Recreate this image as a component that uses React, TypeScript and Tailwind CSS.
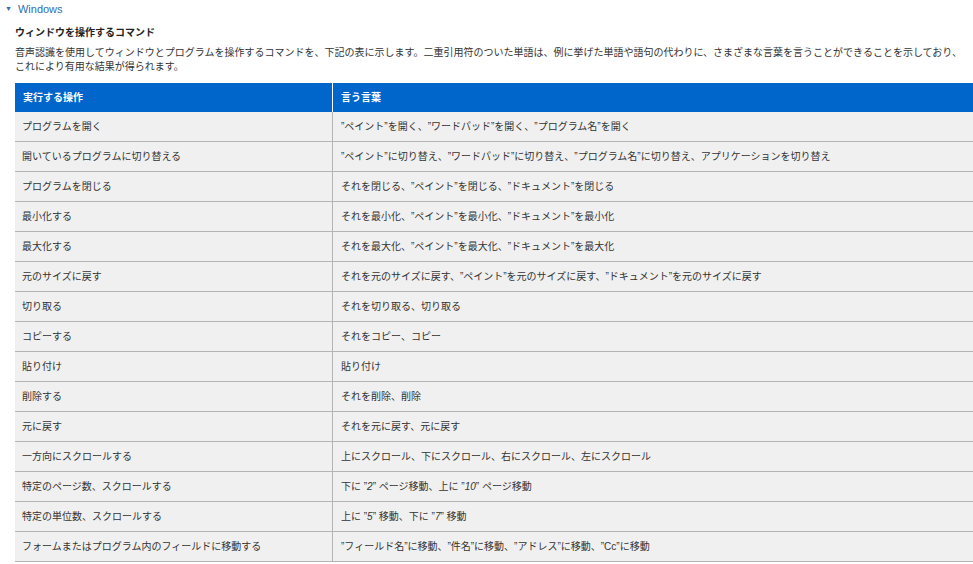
import React from "react";

const rows: [React.ReactNode, React.ReactNode][] = [
  ["プログラムを開く", "”ペイント”を開く、”ワードパッド”を開く、”プログラム名”を開く"],
  ["開いているプログラムに切り替える", "”ペイント”に切り替え、”ワードパッド”に切り替え、”プログラム名”に切り替え、アプリケーションを切り替え"],
  ["プログラムを閉じる", "それを閉じる、”ペイント”を閉じる、”ドキュメント”を閉じる"],
  ["最小化する", "それを最小化、”ペイント”を最小化、”ドキュメント”を最小化"],
  ["最大化する", "それを最大化、”ペイント”を最大化、”ドキュメント”を最大化"],
  ["元のサイズに戻す", "それを元のサイズに戻す、”ペイント”を元のサイズに戻す、”ドキュメント”を元のサイズに戻す"],
  ["切り取る", "それを切り取る、切り取る"],
  ["コピーする", "それをコピー、コピー"],
  ["貼り付け", "貼り付け"],
  ["削除する", "それを削除、削除"],
  ["元に戻す", "それを元に戻す、元に戻す"],
  ["一方向にスクロールする", "上にスクロール、下にスクロール、右にスクロール、左にスクロール"],
  [
    "特定のページ数、スクロールする",
    <>下に ”<i>2</i>” ページ移動、上に ”<i>10</i>” ページ移動</>,
  ],
  [
    "特定の単位数、スクロールする",
    <>上に ”<i>5</i>” 移動、下に ”<i>7</i>” 移動</>,
  ],
  [
    "フォームまたはプログラム内のフィールドに移動する",
    "”フィールド名”に移動、”件名”に移動、”アドレス”に移動、”Cc”に移動",
  ],
];

export default function App() {
  return (
    <div className="w-[973px] h-[564px] overflow-hidden bg-white text-[#333] [text-spacing-trim:space-all] font-['Liberation_Sans','Noto_Sans_CJK_JP',sans-serif]">
      {/* 見出しリンク */}
      <div className="flex items-center h-[18px] pt-[1px] pl-[5px] text-[11px] text-[#2f6db5]">
        <span className="text-[7px] mr-[6px]">▼</span>
        <span>Windows</span>
      </div>

      <div className="pl-[15px]">
        <h2 className="mt-[8px] text-[10px] leading-[14px] font-bold text-[#222]">
          ウィンドウを操作するコマンド
        </h2>
        <p className="mt-[6px] text-[10px] leading-[14px]">
          音声認識を使用してウィンドウとプログラムを操作するコマンドを、下記の表に示します。二重引用符のついた単語は、例に挙げた単語や語句の代わりに、さまざまな言葉を言うことができることを示しており、
          <br />
          これにより有用な結果が得られます。
        </p>

        {/* 表 */}
        <div className="mt-[9px] w-[960px] text-[10px]">
          <div className="flex h-[29px] bg-[#0066cc] text-white font-bold">
            <div className="w-[318px] shrink-0 flex items-center pl-[8px] border-r border-white">
              実行する操作
            </div>
            <div className="flex-1 flex items-center pl-[8px]">言う言葉</div>
          </div>
          {rows.map(([a, b], i) => (
            <div
              key={i}
              className="flex h-[30px] bg-[#f0f0f0] border-b border-[#b4b4b4]"
            >
              <div className="w-[318px] shrink-0 flex items-center pl-[7px] border-r border-[#b4b4b4]">
                {a}
              </div>
              <div className="flex-1 flex items-center pl-[8px]">{b}</div>
            </div>
          ))}
        </div>
      </div>
    </div>
  );
}
